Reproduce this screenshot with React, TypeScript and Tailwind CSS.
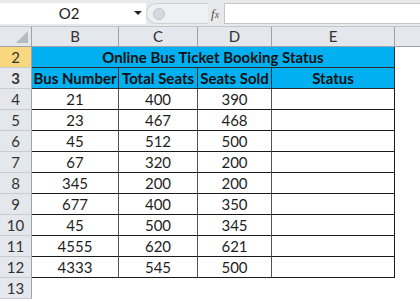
import React from "react";

const rows: [number, string, string, string][] = [
  [4, "21", "400", "390"],
  [5, "23", "467", "468"],
  [6, "45", "512", "500"],
  [7, "67", "320", "200"],
  [8, "345", "200", "200"],
  [9, "677", "400", "350"],
  [10, "45", "500", "345"],
  [11, "4555", "620", "621"],
  [12, "4333", "545", "500"],
];

function RowHead({ n, active }: { n: number; active?: boolean }) {
  return (
    <div
      className={`w-[32px] shrink-0 flex items-center justify-center border-r border-b border-r-[#9da3ab] border-b-[#c8ccd2] text-[15px] text-[#333] ${
        active ? "bg-[#f9d77e]" : "bg-[#e4e7ec]"
      }`}
    >
      {n}
    </div>
  );
}

export default function App() {
  return (
    <div className="w-[420px] h-[302px] overflow-hidden bg-white font-['Lato',sans-serif] text-[#1e1e1e]">
      {/* formula bar */}
      <div className="flex h-[27px] bg-[#e8e9ea] pt-[3px] border-b border-[#c4c6c9]">
        <div className="relative w-[146px] h-[21px] bg-white flex items-center justify-center text-[15px] text-[#222]">
          <span className="ml-[-8px]">O2</span>
          <span className="absolute left-[134px] top-[8px] w-0 h-0 border-l-[4px] border-r-[4px] border-t-[4px] border-l-transparent border-r-transparent border-t-[#222]" />
        </div>
        <div className="w-[78px] h-[21px] flex items-center">
          <div className="h-[21px] w-[62px] rounded-l-full bg-[#eef0f2] border border-[#cdd0d4] border-r-0 flex items-center pl-[6px]">
            <div className="w-[12px] h-[12px] rounded-full bg-[#d6d9dd] border border-[#c2c6cb]" />
          </div>
          <span className="ml-[3px] text-[13px] italic font-['Liberation_Serif',serif] text-[#555]">
            f<span className="text-[10px]">x</span>
          </span>
        </div>
        <div className="flex-1 h-[21px] bg-white border border-[#c4c6c9] border-r-0" />
      </div>

      {/* column headers */}
      <div className="flex h-[20px] bg-[#e4e7ec] text-[15px] text-[#333]">
        <div className="w-[32px] shrink-0 border-r border-b border-[#9da3ab] relative">
          <svg className="absolute right-[3px] bottom-[3px]" width="12" height="12" viewBox="0 0 12 12">
            <polygon points="12,0 12,12 0,12" fill="#b6bbc2" />
          </svg>
        </div>
        <div className="w-[87px] shrink-0 border-r border-b border-[#9da3ab] flex items-center justify-center">B</div>
        <div className="w-[79px] shrink-0 border-r border-b border-[#9da3ab] flex items-center justify-center">C</div>
        <div className="w-[74px] shrink-0 border-r border-b border-[#9da3ab] flex items-center justify-center">D</div>
        <div className="w-[123px] shrink-0 border-r border-b border-[#9da3ab] flex items-center justify-center">E</div>
        <div className="flex-1 border-b border-[#9da3ab]" />
      </div>

      {/* row 2 title */}
      <div className="flex h-[21px]">
        <RowHead n={2} active />
        <div className="w-[363px] shrink-0 bg-[#00b0f0] border-r border-b border-[#2a2a2a] flex items-center justify-center font-bold text-[15px] text-[#111]">
          Online Bus Ticket Booking Status
        </div>
      </div>

      {/* row 3 headings */}
      <div className="flex h-[21px] font-bold text-[15px] text-[#111]">
        <RowHead n={3} />
        <div className="w-[87px] shrink-0 bg-[#00b0f0] border-r border-b border-[#2a2a2a] flex items-center justify-center whitespace-nowrap">Bus Number</div>
        <div className="w-[79px] shrink-0 bg-[#00b0f0] border-r border-b border-[#2a2a2a] flex items-center justify-center whitespace-nowrap">Total Seats</div>
        <div className="w-[74px] shrink-0 bg-[#00b0f0] border-r border-b border-[#2a2a2a] flex items-center justify-center whitespace-nowrap">Seats Sold</div>
        <div className="w-[123px] shrink-0 bg-[#00b0f0] border-r border-b border-[#2a2a2a] flex items-center justify-center">Status</div>
      </div>

      {rows.map(([n, bus, total, sold]) => (
        <div key={n} className="flex h-[21px] text-[15px]">
          <RowHead n={n} />
          <div className="w-[87px] shrink-0 border-r border-b border-r-[#555] border-b-[#1a1a1a] flex items-center justify-center">{bus}</div>
          <div className="w-[79px] shrink-0 border-r border-b border-r-[#555] border-b-[#1a1a1a] flex items-center justify-center">{total}</div>
          <div className="w-[74px] shrink-0 border-r border-b border-r-[#555] border-b-[#1a1a1a] flex items-center justify-center">{sold}</div>
          <div className="w-[123px] shrink-0 border-r border-b border-r-[#1a1a1a] border-b-[#1a1a1a]" />
        </div>
      ))}

      <div className="flex h-[21px]">
        <RowHead n={13} />
      </div>
    </div>
  );
}
